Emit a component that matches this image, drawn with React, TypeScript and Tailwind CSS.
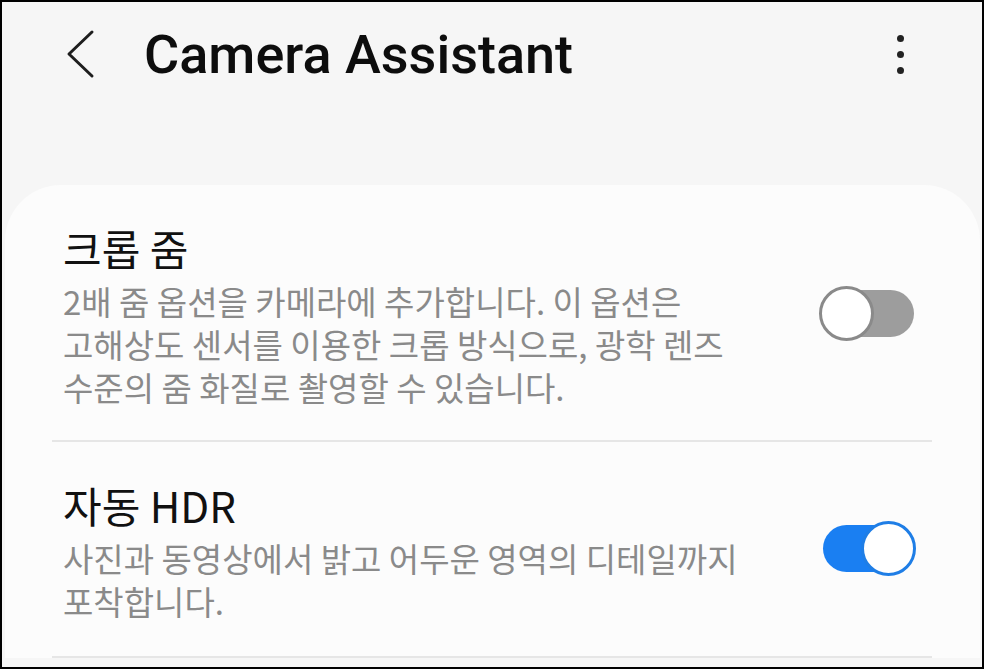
import React from "react";

const ko = "font-['Noto_Sans_CJK_KR','Noto_Sans',sans-serif]";

function Toggle({ on }: { on: boolean }) {
  return (
    <div className="relative w-[97px] h-[57px] shrink-0">
      <div
        className={`absolute left-[4px] right-[2px] top-[5px] bottom-[5px] rounded-full ${
          on ? "bg-[#1a7ff2]" : "bg-[#9d9d9d]"
        }`}
      />
      <div
        className={`absolute top-[1px] w-[55px] h-[55px] rounded-full bg-white border-[3px] ${
          on ? "right-0 border-[#1f7ee6]" : "left-0 border-[#8a8a8a]"
        }`}
      />
    </div>
  );
}

const settings = [
  {
    title: "크롭 줌",
    lines: [
      "2배 줌 옵션을 카메라에 추가합니다. 이 옵션은",
      "고해상도 센서를 이용한 크롭 방식으로, 광학 렌즈",
      "수준의 줌 화질로 촬영할 수 있습니다.",
    ],
    on: false,
    pb: "pb-[31px]",
  },
  {
    title: "자동 HDR",
    lines: ["사진과 동영상에서 밝고 어두운 영역의 디테일까지", "포착합니다."],
    on: true,
    pb: "pb-[33px]",
  },
];

export default function App() {
  return (
    <div className="w-[984px] h-[669px] border-2 border-black bg-[#f6f6f6] overflow-hidden">
      {/* Top bar */}
      <div className="h-[104px] flex items-center pl-[64px] pr-[78px]">
        <svg width="30" height="50" viewBox="0 0 30 50" className="shrink-0">
          <polyline
            points="26,3 3,25 26,47"
            fill="none"
            stroke="#1e1e1e"
            strokeWidth="3"
            strokeLinecap="round"
            strokeLinejoin="round"
          />
        </svg>
        <h1 className="ml-[48px] text-[54px] font-medium text-[#0d0d0d] font-['Roboto',sans-serif]">
          Camera Assistant
        </h1>
        <div className="ml-auto flex flex-col items-center gap-[9px]">
          <span className="w-[7px] h-[7px] rounded-full bg-[#222]" />
          <span className="w-[7px] h-[7px] rounded-full bg-[#222]" />
          <span className="w-[7px] h-[7px] rounded-full bg-[#222]" />
        </div>
      </div>

      {/* Settings card */}
      <div className="mt-[79px] ml-[3px] mr-[2px] rounded-t-[56px] bg-[#fcfcfc]">
        {settings.map((s) => (
          <div key={s.title} className="px-[47px]">
            <div className={`flex items-center pt-[38px] ${s.pb}`}>
              <div className={`flex-1 pl-[11px] ${ko}`}>
                <div className="text-[42px] leading-[50px] text-[#111]">{s.title}</div>
                <div className="mt-[7px] text-[33px] leading-[43px] text-[#8a8a8a]">
                  {s.lines.map((l) => (
                    <div key={l}>{l}</div>
                  ))}
                </div>
              </div>
              <div className="mr-[17px] mb-[6px]">
                <Toggle on={s.on} />
              </div>
            </div>
            <div className="h-[2px] bg-[#e6e6e6] w-[880px]" />
          </div>
        ))}
      </div>
    </div>
  );
}
